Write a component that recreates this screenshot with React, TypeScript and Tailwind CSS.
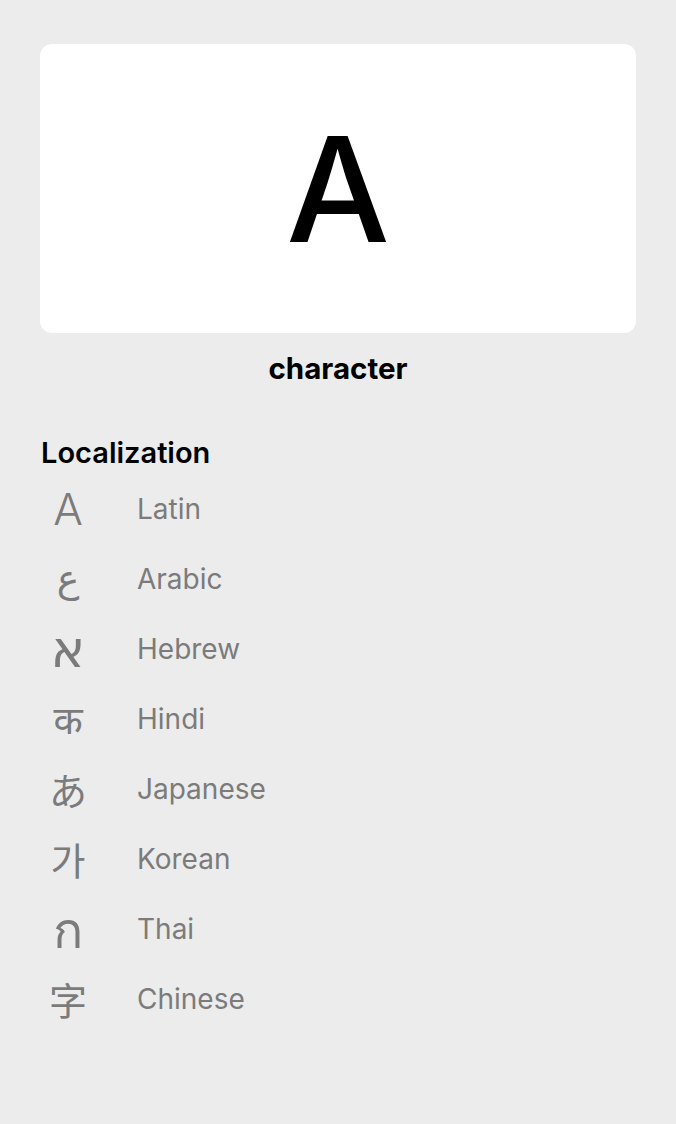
import React from "react";

const scripts = [
  { glyph: "A", name: "Latin", font: "'Inter', 'Noto Sans', sans-serif", size: "text-[44px] font-light" },
  { glyph: "ع", name: "Arabic", font: "'DejaVu Sans', 'Noto Sans', sans-serif", size: "text-[38px]" },
  { glyph: "א", name: "Hebrew", font: "'DejaVu Sans', 'Noto Sans', sans-serif", size: "text-[52px]" },
  { glyph: "क", name: "Hindi", font: "'Noto Sans', 'DejaVu Sans', sans-serif", size: "text-[38px]" },
  { glyph: "あ", name: "Japanese", font: "'Noto Sans CJK JP', sans-serif", size: "text-[38px]" },
  { glyph: "가", name: "Korean", font: "'Noto Sans CJK KR', sans-serif", size: "text-[38px]" },
  { glyph: "ก", name: "Thai", font: "'Noto Sans', 'DejaVu Sans', sans-serif", size: "text-[50px]" },
  { glyph: "字", name: "Chinese", font: "'Noto Sans CJK SC', sans-serif", size: "text-[38px]" },
];

export default function App() {
  return (
    <div className="min-h-screen w-full bg-[#ececec] px-10 pt-[44px] font-['Inter',sans-serif] text-black">
      {/* Preview card */}
      <div className="flex h-[289px] w-full items-center justify-center rounded-xl bg-white">
        <span className="text-[146px] leading-none font-medium">A</span>
      </div>
      <div className="mt-[18px] text-center text-[29.5px] leading-[34px] font-bold">character</div>

      {/* Localization list */}
      <div className="mt-[51px] pl-px text-[29px] leading-[34px] font-semibold">Localization</div>
      <div className="mt-[4px] flex flex-col">
        {scripts.map((s) => (
          <div key={s.name} className="flex h-[70px] items-center">
            <div className="flex h-full w-14 items-center justify-center">
              <span
                className={`${s.size} leading-none text-[#7b7b7b]`}
                style={{ fontFamily: s.font }}
              >
                {s.glyph}
              </span>
            </div>
            <span className="ml-[41px] text-[28px] text-[#7b7b7b]">{s.name}</span>
          </div>
        ))}
      </div>
    </div>
  );
}
